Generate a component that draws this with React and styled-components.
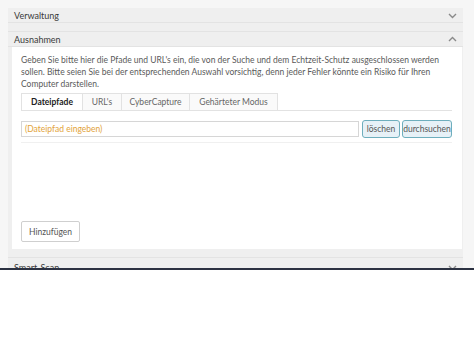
import React from "react";
import styled, { createGlobalStyle } from "styled-components";

const Global = createGlobalStyle`
  html, body { margin: 0; padding: 0; background: #ffffff; }
  * { box-sizing: border-box; }
`;

const Screen = styled.div`
  height: 270px;
  overflow: hidden;
  background: #f6f6f6;
  border-bottom: 2px solid #2c3242;
  padding: 8px 11px 0 8px;
  font-family: Lato, "Open Sans", sans-serif;
`;

const Accordion = styled.div`
  background: #efefef;
  display: flex;
  flex-direction: column;
  gap: 8px;
  padding-bottom: 40px;
`;

const Item = styled.section`
  border-top: 1px solid ${(p) => (p.$first ? "transparent" : "#e3e3e3")};
`;

const Header = styled.div`
  height: ${(p) => p.$h}px;
  display: flex;
  align-items: center;
  justify-content: space-between;
  padding: 0 6px 0 6px;
  font-size: 9px;
  color: #3a3a3a;
  border-bottom: 1px solid #e3e3e3;
`;

const Chevron = ({ up }) => (
  <svg width="9" height="6" viewBox="0 0 9 6">
    <path
      d={up ? "M1 5 L4.5 1.5 L8 5" : "M1 1 L4.5 4.5 L8 1"}
      fill="none"
      stroke="#8a8a8a"
      strokeWidth="1.4"
    />
  </svg>
);

const Body = styled.div`
  margin: 0 1px 0 4px;
  background: #ffffff;
  padding: 7px 10px 7px 9px;
  height: 202px;
  display: flex;
  flex-direction: column;
`;

const Intro = styled.p`
  margin: 0;
  font-size: 8.5px;
  line-height: 12px;
  color: #5a5a5a;
`;

const Tabs = styled.div`
  margin-top: 3px;
  display: flex;
  border-bottom: 1px solid #e2e2e2;
`;

const Tab = styled.div`
  height: 17px;
  width: ${(p) => p.$w}px;
  display: flex;
  align-items: center;
  justify-content: center;
  font-size: 8.5px;
  color: ${(p) => (p.$active ? "#222" : "#666")};
  font-weight: ${(p) => (p.$active ? 700 : 400)};
  background: ${(p) => (p.$active ? "#fff" : "#fafafa")};
  border: 1px solid #e2e2e2;
  border-bottom: none;
  margin-left: -1px;
  &:first-child { margin-left: 0; }
`;

const Row = styled.div`
  margin-top: 9px;
  display: flex;
  align-items: center;
  gap: 2px;
  padding-bottom: 4px;
  border-bottom: 1px solid #f0f0f0;
`;

const Input = styled.div`
  flex: 1;
  height: 16px;
  border: 1px solid #d6d6d6;
  display: flex;
  align-items: center;
  padding: 0 3px;
  font-size: 8.5px;
  color: #e2a33a;
  margin-right: 1px;
`;

const SmallButton = styled.div`
  height: 18px;
  width: ${(p) => p.$w}px;
  display: flex;
  align-items: center;
  justify-content: center;
  font-size: 8.5px;
  color: #555;
  background: #e7f1f7;
  border: 1px solid #6eaebd;
  border-radius: 3px;
`;

const Spacer = styled.div`
  flex: 1;
`;

const AddButton = styled.div`
  align-self: flex-start;
  height: 21px;
  width: 59px;
  display: flex;
  align-items: center;
  justify-content: center;
  font-size: 8.5px;
  color: #555;
  background: #fff;
  border: 1px solid #cfcfcf;
  border-radius: 2px;
`;

export default function App() {
  return (
    <>
      <Global />
      <Screen>
        <Accordion>
          <Item $first>
            <Header $h={14}>
              <span>Verwaltung</span>
              <Chevron />
            </Header>
          </Item>
          <Item>
            <Header $h={15}>
              <span>Ausnahmen</span>
              <Chevron up />
            </Header>
            <Body>
              <Intro>
                Geben Sie bitte hier die Pfade und URL's ein, die von der Suche und dem
                Echtzeit-Schutz ausgeschlossen werden sollen. Bitte seien Sie bei der
                entsprechenden Auswahl vorsichtig, denn jeder Fehler könnte ein Risiko
                für Ihren Computer darstellen.
              </Intro>
              <Tabs>
                <Tab $active $w={62}>Dateipfade</Tab>
                <Tab $w={40}>URL's</Tab>
                <Tab $w={69}>CyberCapture</Tab>
                <Tab $w={89}>Gehärteter Modus</Tab>
              </Tabs>
              <Row>
                <Input>(Dateipfad eingeben)</Input>
                <SmallButton $w={38}>löschen</SmallButton>
                <SmallButton $w={50}>durchsuchen</SmallButton>
              </Row>
              <Spacer />
              <AddButton>Hinzufügen</AddButton>
            </Body>
          </Item>
          <Item>
            <Header $h={20}>
              <span>Smart-Scan</span>
              <Chevron />
            </Header>
          </Item>
        </Accordion>
      </Screen>
    </>
  );
}
